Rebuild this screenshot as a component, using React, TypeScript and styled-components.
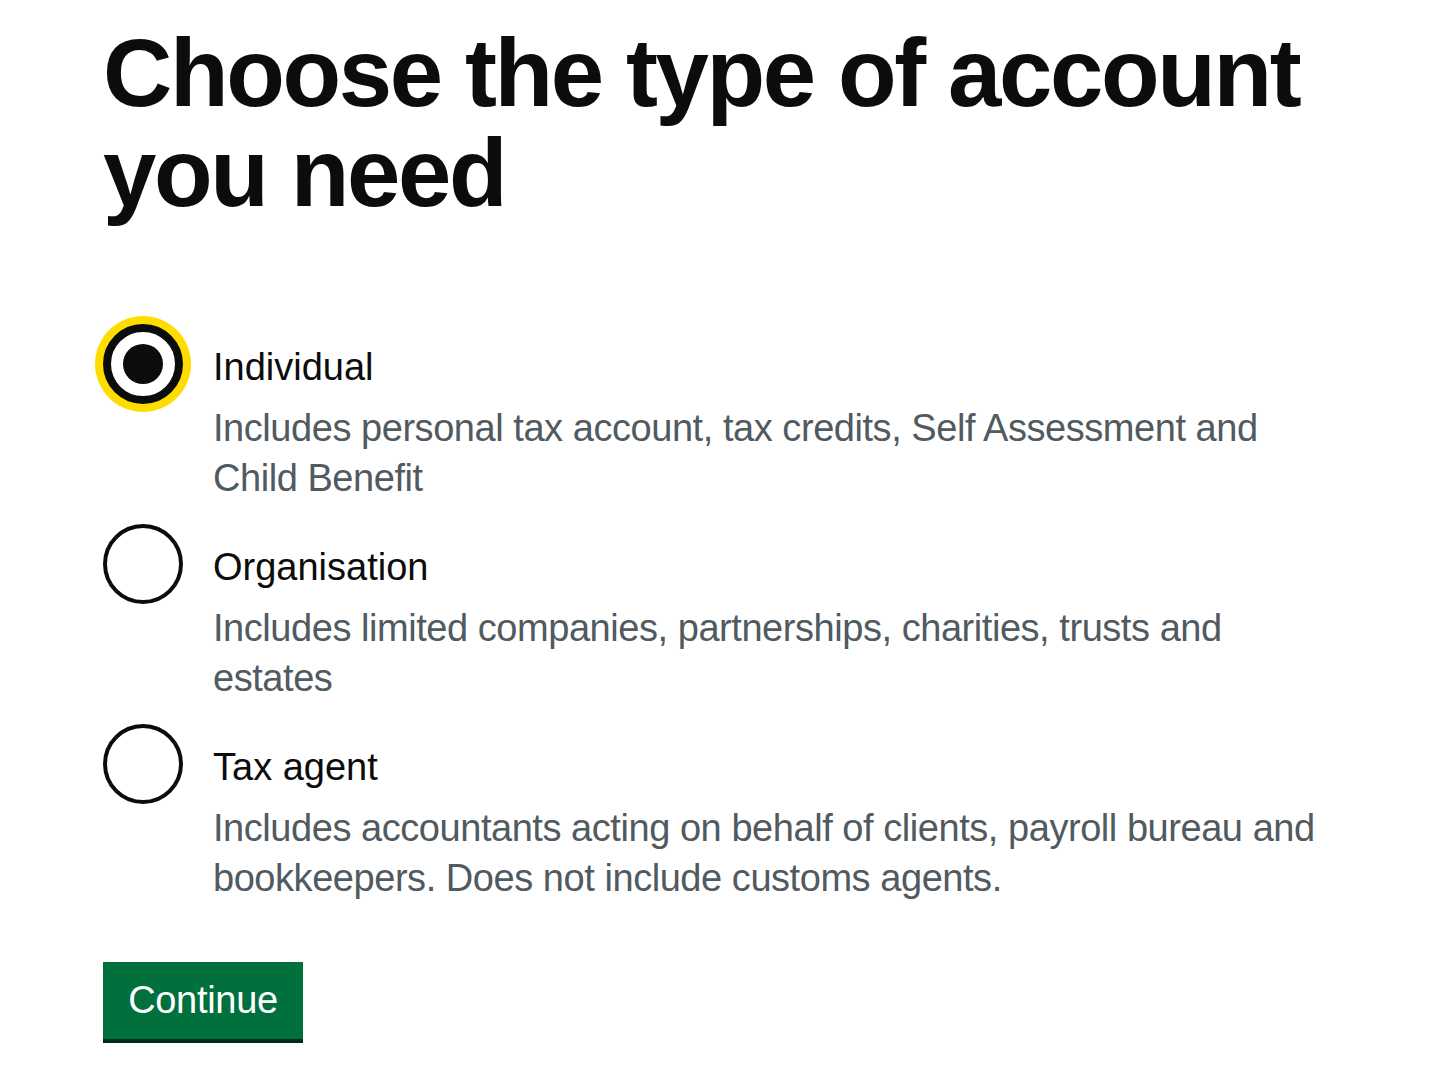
import React from "react";
import styled, { createGlobalStyle, css } from "styled-components";

const GlobalStyle = createGlobalStyle`
  html, body {
    margin: 0;
    padding: 0;
    background: #ffffff;
  }
  body {
    font-family: "Liberation Sans", Arial, sans-serif;
    color: #0b0c0c;
    -webkit-font-smoothing: antialiased;
  }
`;

const Page = styled.main`
  padding: 23px 0 0 103px;
  box-sizing: border-box;
  width: 1438px;
`;

const Heading = styled.h1`
  margin: 0 0 101px 0;
  font-size: 96px;
  line-height: 100px;
  font-weight: 700;
  letter-spacing: -2.4px;
  color: #0b0c0c;
  max-width: 1240px;
`;

const Fieldset = styled.fieldset`
  margin: 0;
  padding: 0;
  border: 0;
`;

const RadioItem = styled.div`
  display: flex;
  align-items: flex-start;
  margin-bottom: 21px;
  cursor: pointer;
`;

const RadioControl = styled.span<{ $checked?: boolean; $focused?: boolean }>`
  flex: 0 0 auto;
  box-sizing: border-box;
  width: 80px;
  height: 80px;
  border-radius: 50%;
  border: 4px solid #0b0c0c;
  background: #ffffff;
  display: flex;
  align-items: center;
  justify-content: center;
  ${(p) =>
    p.$focused &&
    css`
      border-width: 8px;
      box-shadow: 0 0 0 8px #ffdd00;
    `}
`;

const RadioDot = styled.span`
  width: 40px;
  height: 40px;
  border-radius: 50%;
  background: #0b0c0c;
`;

const RadioBody = styled.div`
  display: flex;
  flex-direction: column;
`;

const RadioLabel = styled.label`
  display: block;
  padding: 18px 30px 0 30px;
  font-size: 38px;
  line-height: 50px;
  letter-spacing: 0;
  color: #0b0c0c;
  cursor: pointer;
`;

const RadioHint = styled.div`
  margin-top: 11px;
  padding-left: 30px;
  max-width: 1122px;
  font-size: 38px;
  line-height: 50px;
  letter-spacing: -0.45px;
  color: #505a5f;
`;

const Button = styled.button`
  margin-top: 38px;
  box-sizing: border-box;
  height: 81px;
  width: 200px;
  padding: 0;
  border: 0;
  border-bottom: 4px solid #002d18;
  border-radius: 0;
  background: #00703c;
  color: #ffffff;
  font-family: "Liberation Sans", Arial, sans-serif;
  font-size: 38px;
  line-height: 77px;
  letter-spacing: -0.3px;
  cursor: pointer;
  display: block;
`;

type Option = {
  id: string;
  label: string;
  hint: string;
};

const options: Option[] = [
  {
    id: "individual",
    label: "Individual",
    hint: "Includes personal tax account, tax credits, Self Assessment and Child Benefit",
  },
  {
    id: "organisation",
    label: "Organisation",
    hint: "Includes limited companies, partnerships, charities, trusts and estates",
  },
  {
    id: "agent",
    label: "Tax agent",
    hint: "Includes accountants acting on behalf of clients, payroll bureau and bookkeepers. Does not include customs agents.",
  },
];

export default function App() {
  const [selected, setSelected] = React.useState("individual");
  return (
    <>
      <GlobalStyle />
      <Page>
        <Heading>Choose the type of account you need</Heading>
        <Fieldset>
          {options.map((o) => {
            const checked = selected === o.id;
            return (
              <RadioItem key={o.id} onClick={() => setSelected(o.id)}>
                <RadioControl $checked={checked} $focused={checked}>
                  {checked && <RadioDot />}
                </RadioControl>
                <RadioBody>
                  <RadioLabel>{o.label}</RadioLabel>
                  <RadioHint>{o.hint}</RadioHint>
                </RadioBody>
              </RadioItem>
            );
          })}
        </Fieldset>
        <Button type="button">Continue</Button>
      </Page>
    </>
  );
}
